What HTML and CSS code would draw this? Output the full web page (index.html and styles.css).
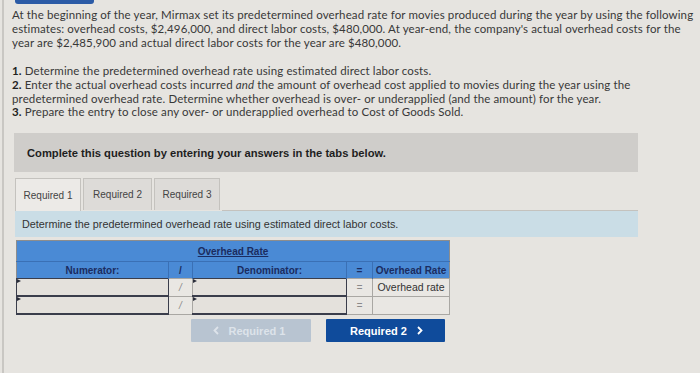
FILE: index.html
```html
<!DOCTYPE html>
<html lang="en">
<head>
    <meta charset="UTF-8">
    <meta name="viewport" content="width=device-width, initial-scale=1.0">
    <title>Overhead Rate</title>
    <link rel="stylesheet" href="styles.css">
</head>
<body>
    <div class="page">
        <div class="topbar"></div>

        <p class="intro">
            At the beginning of the year, Mirmax set its predetermined overhead rate for movies produced during the year by using the following<br>
            estimates: overhead costs, $2,496,000, and direct labor costs, $480,000. At year-end, the company's actual overhead costs for the<br>
            year are $2,485,900 and actual direct labor costs for the year are $480,000.
        </p>

        <p class="steps">
            <b>1.</b> Determine the predetermined overhead rate using estimated direct labor costs.<br>
            <b>2.</b> Enter the actual overhead costs incurred <em>and</em> the amount of overhead cost applied to movies during the year using the<br>
            predetermined overhead rate. Determine whether overhead is over- or underapplied (and the amount) for the year.<br>
            <b>3.</b> Prepare the entry to close any over- or underapplied overhead to Cost of Goods Sold.
        </p>

        <div class="notice">
            <strong>Complete this question by entering your answers in the tabs below.</strong>
        </div>

        <div class="tabs">
            <div class="tab active">Required 1</div>
            <div class="tab">Required 2</div>
            <div class="tab">Required 3</div>
            <div class="tab-rest"></div>
        </div>

        <div class="prompt">Determine the predetermined overhead rate using estimated direct labor costs.</div>

        <table class="rate">
            <colgroup>
                <col class="c-num">
                <col class="c-op">
                <col class="c-den">
                <col class="c-eq">
                <col class="c-res">
            </colgroup>
            <tr class="head-title">
                <th colspan="5"><u>Overhead Rate</u></th>
            </tr>
            <tr class="head-cols">
                <th>Numerator:</th>
                <th>/</th>
                <th>Denominator:</th>
                <th>=</th>
                <th>Overhead Rate</th>
            </tr>
            <tr>
                <td class="input"></td>
                <td class="op">/</td>
                <td class="input"></td>
                <td class="op">=</td>
                <td class="label">Overhead rate</td>
            </tr>
            <tr>
                <td class="input"></td>
                <td class="op">/</td>
                <td class="input"></td>
                <td class="op">=</td>
                <td class="label"></td>
            </tr>
        </table>

        <div class="nav">
            <button class="btn prev">
                <svg class="chev" width="6" height="9" viewBox="0 0 6 9"><path d="M5 1 L1.5 4.5 L5 8" fill="none" stroke="currentColor" stroke-width="1.8"/></svg>
                Required 1
            </button>
            <button class="btn next">
                Required 2
                <svg class="chev" width="6" height="9" viewBox="0 0 6 9"><path d="M1 1 L4.5 4.5 L1 8" fill="none" stroke="currentColor" stroke-width="1.8"/></svg>
            </button>
        </div>
    </div>
</body>
</html>
```

FILE: styles.css
```css
body {
    margin: 0;
    background-color: #e6e4e0;
    font-family: "Liberation Sans", Arial, sans-serif;
}
.page {
    height: 373px;
    margin-left: 2px;
    padding-left: 8px;
    border-left: 2px solid #c9c7c3;
    overflow: hidden;
}
.topbar {
    width: 79px;
    height: 4px;
    margin-left: 3px;
    background-color: #2c5ba6;
    border-radius: 0 0 3px 3px;
}
.intro,
.steps {
    margin: 0;
    font-family: Lato, "Liberation Sans", sans-serif;
    font-size: 11.5px;
    letter-spacing: 0.12px;
    color: #383838;
    white-space: nowrap;
}
.intro {
    margin-top: 4px;
    line-height: 14px;
}
.steps {
    margin-top: 14px;
    line-height: 13.8px;
}
.steps b {
    color: #222;
}
.notice {
    width: 611px;
    height: 39px;
    margin-top: 14px;
    margin-left: 2px;
    padding-left: 13px;
    display: flex;
    align-items: center;
    background-color: #cfcdca;
    font-size: 11.2px;
    color: #1e1e1e;
}
.tabs {
    display: flex;
    margin-top: 6px;
    margin-left: 3px;
    width: 623px;
}
.tab {
    width: 66px;
    height: 32px;
    margin-right: 2px;
    display: flex;
    align-items: center;
    justify-content: center;
    font-size: 10px;
    color: #444;
    background-color: #dddbd8;
    border: 1px solid #c4c2be;
    border-bottom: none;
    box-sizing: border-box;
}
.tab:nth-child(2) {
    width: 69px;
}
.tab.active {
    background-color: #eceae7;
    height: 33px;
}
.tab-rest {
    flex: 1;
    border-bottom: 1px solid #c4c2be;
}
.prompt {
    width: 616px;
    height: 26px;
    margin-left: 3px;
    padding-left: 7px;
    display: flex;
    align-items: center;
    background-color: #cadde6;
    font-size: 10.8px;
    color: #333;
}
.rate {
    margin-top: 3px;
    margin-left: 4px;
    border-collapse: collapse;
    table-layout: fixed;
    width: 433px;
    border: 1px solid #8d8d8d;
    font-size: 10px;
}
.c-num { width: 152px; }
.c-op { width: 24px; }
.c-den { width: 154px; }
.c-eq { width: 26px; }
.c-res { width: 77px; }
.rate th {
    background-color: #4a8ad5;
    color: #1b2c60;
    font-weight: bold;
    padding: 0;
    text-align: center;
}
.head-title th {
    height: 20px;
    font-size: 10px;
}
.head-cols th {
    height: 16px;
    border-left: 1px solid #3a70b5;
    border-top: 1px solid #3a70b5;
}
.head-cols th:first-child {
    border-left: none;
}
.rate td {
    height: 16px;
    padding: 0;
    border: 1px solid #a9a7a3;
    background-color: #e9e7e3;
    text-align: center;
}
.rate td.input {
    position: relative;
    background-color: #e4e1dc;
    border: 1px solid #3a3d4b;
    border-bottom-width: 2px;
}
.rate td.input::before {
    content: "";
    position: absolute;
    left: 0;
    top: 0;
    border-left: 4px solid #2a2d3a;
    border-top: 2px solid transparent;
    border-bottom: 2px solid transparent;
}
.rate td.op {
    color: #8a8a8a;
    font-style: italic;
}
.rate td.label {
    color: #333;
    font-size: 10.5px;
}
.nav {
    width: 429px;
    margin-left: 4px;
    margin-top: 4px;
    display: flex;
    justify-content: flex-end;
    gap: 15px;
}
.btn {
    width: 120px;
    height: 23px;
    display: flex;
    align-items: center;
    justify-content: center;
    gap: 10px;
    border: none;
    border-radius: 1px;
    font-family: "Liberation Sans", Arial, sans-serif;
    font-size: 11px;
    font-weight: bold;
    cursor: pointer;
}
.btn.prev {
    background-color: #b8c4d1;
    color: #dde3ea;
    padding-right: 10px;
}
.btn.next {
    width: 119px;
    background-color: #0f4b9b;
    color: #fff;
    padding-left: 8px;
}
```
